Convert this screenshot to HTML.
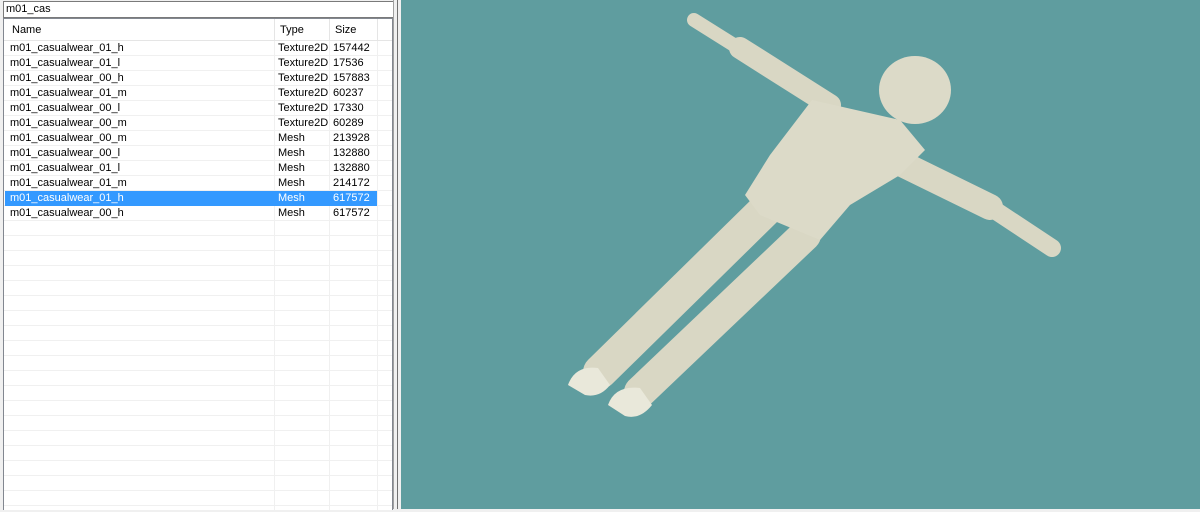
<!DOCTYPE html><html><head><style>
body{margin:0;width:1200px;height:509px;overflow:hidden;background:#f0f0f0;font-family:"Liberation Sans",sans-serif;font-size:11px;position:relative}
#tb{position:absolute;left:3px;top:1px;width:388px;height:15px;border:1px solid #7a7a7a;background:#fff;line-height:15px;padding-left:2px;font-size:11px}
#list{position:absolute;left:3px;top:18px;width:388px;height:491px;border:1px solid #828790;border-bottom:none;background:#fff;overflow:hidden}
.r{position:absolute;left:0;height:15px;width:388px;line-height:15px;border-bottom:1px solid #f0f0f0;box-sizing:border-box}
.r span{position:absolute;top:0}
.c1{left:6px}.c2{left:274px}.c3{left:329px}
.vl{position:absolute;top:0;bottom:0;width:1px;background:#f0f0f0}
#hd{position:absolute;left:0;top:0;width:388px;height:21px;background:#fff;border-bottom:1px solid #e5e5e5;line-height:23px}
#hd span{position:absolute;top:0}
.hs{position:absolute;top:0;width:1px;height:21px;background:#e5e5e5}
.sel{background:#3399ff;color:#fff}
#sp{position:absolute;left:393px;top:0;width:8px;height:509px;background:#f0f0f0;border-left:1px solid #a0a0a0}
#sp:after{content:"";position:absolute;left:3px;top:0;width:1px;height:509px;background:#707070}
#view{position:absolute;left:401px;top:0;width:799px;height:509px;background:#5f9d9f}
</style></head><body>
<div id="tb">m01_cas</div>
<div id="list">
<div class="vl" style="left:270px"></div><div class="vl" style="left:325px"></div><div class="vl" style="left:373px"></div>
<div id="hd"><span style="left:8px">Name</span><span style="left:276px">Type</span><span style="left:331px">Size</span><div class="hs" style="left:270px"></div><div class="hs" style="left:325px"></div><div class="hs" style="left:373px"></div></div>
<div id="rows"></div>
</div>
<div id="sp"></div>
<div id="view">
<svg width="799" height="509" viewBox="401 0 799 509">
<g stroke="#d9d7c4" stroke-linecap="round" stroke-linejoin="round" fill="none">
<path d="M765 210 L600 372" stroke-width="34"/>
<path d="M805 235 L640 392" stroke-width="32"/>
<path d="M694 20 L745 52 L830 105" stroke-width="14"/>
<path d="M740 48 L830 105" stroke-width="22"/>
<path d="M890 158 L990 207 L1052 248" stroke-width="18"/>
<path d="M890 158 L990 207" stroke-width="26"/>
</g>
<g fill="#dcdac8">
<path d="M812 100 L900 120 L925 150 L900 175 L850 205 L820 240 L760 215 L745 195 L770 155 Z"/>
<ellipse cx="915" cy="90" rx="36" ry="34"/>
<path d="M568 385 Q575 365 598 368 L610 385 Q600 398 585 395 Z" fill="#e9e8da"/>
<path d="M608 405 Q615 385 640 388 L652 405 Q640 420 625 416 Z" fill="#e9e8da"/>
</g>
</svg>
</div>
<script>
var d=[["m01_casualwear_01_h","Texture2D","157442"],["m01_casualwear_01_l","Texture2D","17536"],["m01_casualwear_00_h","Texture2D","157883"],["m01_casualwear_01_m","Texture2D","60237"],["m01_casualwear_00_l","Texture2D","17330"],["m01_casualwear_00_m","Texture2D","60289"],["m01_casualwear_00_m","Mesh","213928"],["m01_casualwear_00_l","Mesh","132880"],["m01_casualwear_01_l","Mesh","132880"],["m01_casualwear_01_m","Mesh","214172"],["m01_casualwear_01_h","Mesh","617572"],["m01_casualwear_00_h","Mesh","617572"]];
var h="";for(var i=0;i<32;i++){var t=22+15*i,r=d[i]||["","",""];
h+='<div class="r" style="top:'+t+'px">'+(i==10?'<div class="sel" style="position:absolute;left:1px;width:372px;height:15px"></div>':'')+'<span class="c1"'+(i==10?' style="color:#fff"':'')+'>'+r[0]+'</span><span class="c2"'+(i==10?' style="color:#fff"':'')+'>'+r[1]+'</span><span class="c3"'+(i==10?' style="color:#fff"':'')+'>'+r[2]+'</span></div>';}
document.getElementById("rows").innerHTML=h;
</script>
</body></html>
